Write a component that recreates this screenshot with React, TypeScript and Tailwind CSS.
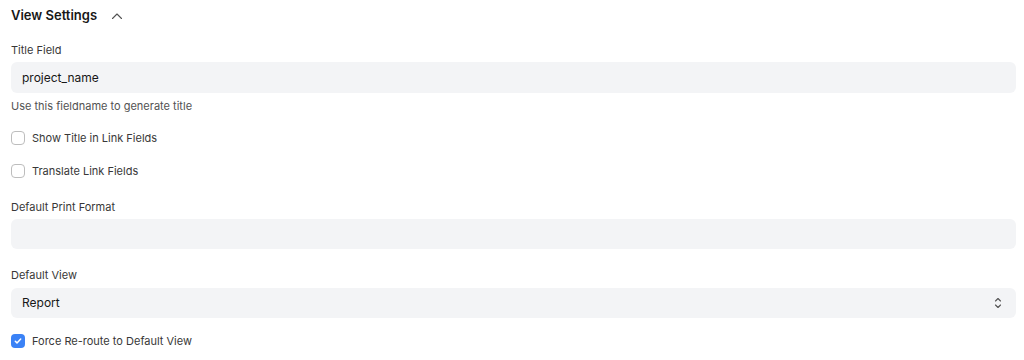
function Checkbox({ checked }: { checked?: boolean }) {
  if (checked) {
    return (
      <span className="flex h-[14px] w-[14px] items-center justify-center rounded-[4px] bg-[#3b82f6]">
        <svg width="10" height="10" viewBox="0 0 10 10" fill="none">
          <path d="M2.3 5.2l1.7 1.7 3.7-3.8" stroke="white" strokeWidth="1.5" strokeLinecap="round" strokeLinejoin="round" />
        </svg>
      </span>
    );
  }
  return <span className="block h-[14px] w-[14px] rounded-[4px] border border-[#bdbdbd] bg-white" />;
}

function CheckRow({ label, checked, className }: { label: string; checked?: boolean; className?: string }) {
  return (
    <label className={`flex h-4 items-center gap-[7px] ${className || ''}`}>
      <Checkbox checked={checked} />
      <span className="text-[11px] text-[#383838]">{label}</span>
    </label>
  );
}

export default function App() {
  return (
    <div className="min-h-[360px] bg-white pl-[11px] pr-[8px] font-['Inter','Noto_Sans',sans-serif] text-[#171717]">
      {/* header */}
      <div className="flex h-[31px] items-center gap-[14px]">
        <h2 className="text-[13px] font-semibold">View Settings</h2>
        <svg width="12" height="8" viewBox="0 0 12 8" fill="none">
          <path d="M1.5 6.5L6 2l4.5 4.5" stroke="#525252" strokeWidth="1.1" strokeLinecap="round" strokeLinejoin="round" />
        </svg>
      </div>

      <div className="mt-[11px] flex h-4 items-center text-[11px] text-[#383838]">Title Field</div>
      <div className="mt-[4px] flex h-[31px] items-center rounded-md bg-[#f3f4f6] px-[11px] text-[12px]">
        project_name
      </div>
      <div className="mt-[5px] flex h-4 items-center text-[11px] text-[#525252]">Use this fieldname to generate title</div>

      <CheckRow className="mt-[16px]" label="Show Title in Link Fields" />
      <CheckRow className="mt-[17px]" label="Translate Link Fields" />

      <div className="mt-[20px] flex h-4 items-center text-[11px] text-[#383838]">Default Print Format</div>
      <div className="mt-[4px] h-[30px] rounded-md bg-[#f3f4f6]" />

      <div className="mt-[18px] flex h-4 items-center text-[11px] text-[#383838]">Default View</div>
      <div className="mt-[5px] flex h-[30px] items-center justify-between rounded-md bg-[#f3f4f6] pl-[11px] pr-[14px] text-[12px]">
        <span>Report</span>
        <svg width="8" height="12" viewBox="0 0 8 12" fill="none">
          <path d="M1.5 4L4 1.5 6.5 4M1.5 8L4 10.5 6.5 8" stroke="#525252" strokeWidth="1.1" strokeLinecap="round" strokeLinejoin="round" />
        </svg>
      </div>

      <CheckRow className="mt-[15px]" label="Force Re-route to Default View" checked />
    </div>
  );
}
